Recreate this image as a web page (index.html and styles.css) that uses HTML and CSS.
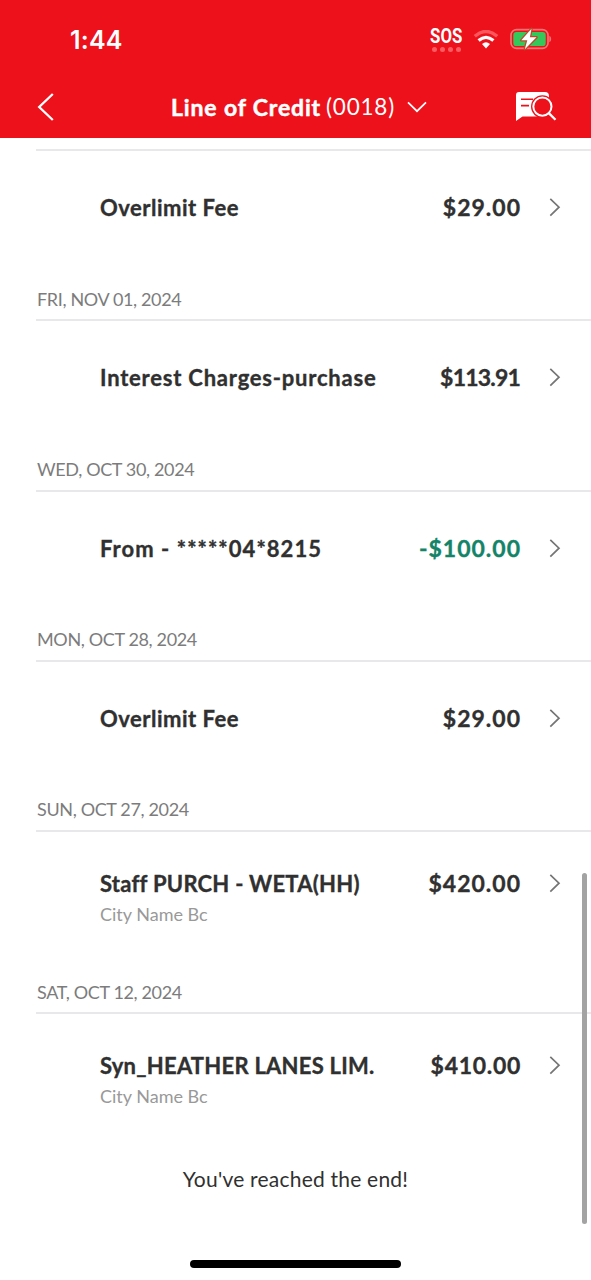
FILE: index.html
```html
<!DOCTYPE html>
<html lang="en">
<head>
<meta charset="utf-8">
<title>Line of Credit</title>
<link rel="stylesheet" href="styles.css">
</head>
<body>
<svg class="defs" aria-hidden="true"><symbol id="chev" viewBox="0 0 12 20"><path d="M1.3 1.8 10 10.2 1.3 18.6" fill="none" stroke="#757575" stroke-width="1.7"/></symbol></svg>
<header class="top">
  <div class="status">
    <span class="time">1:44</span>
    <div class="indicators">
      <div class="sos"><span class="sos-text">SOS</span><div class="dots"><i></i><i></i><i></i><i></i></div></div>
      <svg class="wifi" width="26" height="20" viewBox="0 0 26 20" fill="none">
        <path d="M1.8 6.2Q13-3.2 24.2 6.2" stroke="#ff565c" stroke-width="3.4"/>
        <path d="M5.6 10.5Q13 4.2 20.4 10.5" stroke="#fff" stroke-width="3.3"/>
        <path d="M9 14.1Q13 10.5 17 14.1L13 18.6Z" fill="#fff"/>
      </svg>
      <svg class="battery" width="43" height="24" viewBox="0 0 43 24">
        <rect x="1" y="2.6" width="37" height="18.8" rx="5.5" fill="none" stroke="#fa7376" stroke-width="1.6"/>
        <path d="M39.4 8.8q1.8 1 1.8 3.2t-1.8 3.2z" fill="#fa7376"/>
        <rect x="3.3" y="4.9" width="32.4" height="14.2" rx="3.2" fill="#35c759"/>
        <path d="M21.5 1.8 11.3 13.3h6L14.8 22.2 26.5 10.3h-6.6z" fill="#fff" stroke="#ba4a2b" stroke-width="2.6" stroke-linejoin="round"/>
        <path d="M21.5 1.8 11.3 13.3h6L14.8 22.2 26.5 10.3h-6.6z" fill="#fff"/>
      </svg>
    </div>
  </div>
  <nav class="nav">
    <svg class="back" width="18" height="30" viewBox="0 0 18 30"><path d="M15.8 2 2.2 15 15.8 28" fill="none" stroke="#fff" stroke-width="2.3"/></svg>
    <h1 class="title"><b>Line of Credit</b><span class="acct">(0018)</span><svg class="down" width="20" height="12" viewBox="0 0 20 12"><path d="M1 1.3 10 10.2 19 1.3" fill="none" stroke="#fff" stroke-width="1.7"/></svg></h1>
    <svg class="search" width="42" height="32" viewBox="0 0 42 32" fill="none">
      <path d="M4 1H30Q34 1 34 5V25.5H7.5L1 30V4Q1 1 4 1Z" fill="#fff"/>
      <path d="M6 8.2H18M6 14.6H14" stroke="#ed111b" stroke-width="1.6"/>
      <path d="M34 25.5V22L28 16V26.5H36Z" fill="#ed111b"/>
      <circle cx="27.4" cy="15.6" r="11.4" fill="#ed111b"/>
      <circle cx="27.4" cy="15.6" r="9.1" stroke="#fff" stroke-width="2"/>
      <path d="M33.8 22.1 40.5 28.8" stroke="#fff" stroke-width="2.3"/>
    </svg>
  </nav>
</header>
<main class="list">
  <section class="group first">
    <div class="row"><span class="name n1">Overlimit Fee</span><span class="amount">$29.00</span><svg class="chev"><use href="#chev"/></svg></div>
  </section>
  <section class="group">
    <h2 class="date">FRI, NOV 01, 2024</h2>
    <div class="row"><span class="name n2">Interest Charges-purchase</span><span class="amount narrow">$113.91</span><svg class="chev"><use href="#chev"/></svg></div>
  </section>
  <section class="group">
    <h2 class="date">WED, OCT 30, 2024</h2>
    <div class="row"><span class="name n3">From - *****04*8215</span><span class="amount credit">-$100.00</span><svg class="chev"><use href="#chev"/></svg></div>
  </section>
  <section class="group">
    <h2 class="date">MON, OCT 28, 2024</h2>
    <div class="row"><span class="name n1">Overlimit Fee</span><span class="amount">$29.00</span><svg class="chev"><use href="#chev"/></svg></div>
  </section>
  <section class="group">
    <h2 class="date">SUN, OCT 27, 2024</h2>
    <div class="row tall"><div class="info"><span class="name n4">Staff PURCH - WETA(HH)</span><span class="city">City Name Bc</span></div><span class="amount">$420.00</span><svg class="chev"><use href="#chev"/></svg></div>
  </section>
  <section class="group">
    <h2 class="date">SAT, OCT 12, 2024</h2>
    <div class="row tall"><div class="info"><span class="name n4">Syn_HEATHER LANES LIM.</span><span class="city">City Name Bc</span></div><span class="amount mid">$410.00</span><svg class="chev"><use href="#chev"/></svg></div>
  </section>
  <p class="end">You've reached the end!</p>
</main>
<div class="scrollbar"></div>
<div class="home"></div>
</body>
</html>
```
FILE: styles.css
```css
* { box-sizing: border-box; }
body { margin: 0; width: 591px; height: 1280px; overflow: hidden; position: relative; background: #fff; font-family: Lato, "Noto Sans", sans-serif; color: #303030; }
.defs { position: absolute; width: 0; height: 0; }
.top { height: 138px; background: #ed111b; color: #fff; }
.status { height: 76px; display: flex; justify-content: space-between; padding: 3px 38px 0 70px; align-items: center; }
.time { font: 600 25px/30px Inter, sans-serif; letter-spacing: .2px; padding-top: 1px; }
.indicators { display: flex; align-items: center; height: 30px; }
.sos { display: flex; flex-direction: column; align-items: center; width: 32px; margin-right: 11px; padding-bottom: 3px; }
.sos-text { font: 700 20px/22px Roboto, sans-serif; transform: scaleX(.84); }
.dots { display: flex; gap: 3px; }
.dots i { width: 5px; height: 5px; border-radius: 50%; background: #ff5b60; }
.wifi { margin-right: 11px; }
.battery { margin-top: -1px; }
.nav { height: 62px; display: flex; align-items: center; padding: 0 34px 0 37px; }
.back { flex: none; }
.title { display: flex; align-items: center; margin: 0 auto 0 116px; font-size: 23px; line-height: 30px; font-weight: 400; white-space: pre; }
.title b { font-weight: 700; letter-spacing: .85px; -webkit-text-stroke: .5px #fff; }
.acct { font-weight: 400; margin-left: 5px; font-size: 22.5px; letter-spacing: .8px; }
.down { margin-left: 12px; }
.list { padding-top: 11px; }
.group { margin: 0; }
.first { margin-left: 36px; border-top: 2px solid #e8e8ea; }
.first .row { margin-left: -36px; }
.date { margin: 0 0 0 36px; height: 53.3px; padding: 18.6px 0 0 1px; border-bottom: 2px solid #e8e8ea; font-size: 18px; line-height: 24px; font-weight: 400; letter-spacing: -.36px; color: #7c7c7c; }
.row { height: 117px; display: flex; align-items: flex-start; padding: 43px 30px 0 100px; }
.tall { height: 129px; padding-top: 38px; }
.info { display: flex; flex-direction: column; gap: 3px; }
.name { font-size: 22px; line-height: 28px; font-weight: 700; white-space: nowrap; -webkit-text-stroke: .35px; }
.n1 { letter-spacing: .5px; }
.n2 { letter-spacing: .78px; }
.n3 { letter-spacing: 1.05px; }
.n4 { letter-spacing: .25px; }
.city { font-size: 18px; line-height: 26px; color: #999; }
.amount { margin: -1px 0 0 auto; font-size: 23px; line-height: 28px; font-weight: 700; letter-spacing: 1px; -webkit-text-stroke: .35px; }
.narrow { letter-spacing: -.8px; margin-right: 1px; }
.mid { letter-spacing: .7px; }
.credit { color: #138468; }
.chev { width: 12px; height: 20px; margin: 3px 0 0 28px; flex: none; }
.end { margin: 22px 0 0; text-align: center; font-size: 21px; line-height: 28px; letter-spacing: .22px; }
.scrollbar { position: absolute; right: 4px; top: 873px; width: 5px; height: 351px; border-radius: 3px; background: #a3a3a3; }
.home { position: absolute; left: 190px; top: 1260px; width: 211px; height: 8px; border-radius: 4px; background: #000; }
```
